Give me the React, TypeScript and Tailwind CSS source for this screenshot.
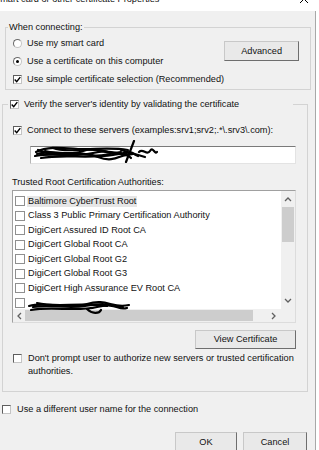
import type { ReactNode } from 'react';

const Check = () => (
  <svg width="7" height="7" viewBox="0 0 7 7" className="block">
    <path d="M0.7 3.5 L2.7 5.7 L6.3 1.1" stroke="#000" strokeWidth="1.4" fill="none" />
  </svg>
);

// sunken checkbox; list rows use the flat grey one
const Box = ({ checked, list }: { checked?: boolean; list?: boolean }) => (
  <span
    className={`flex items-center justify-center shrink-0 bg-white ${
      list
        ? 'w-[10px] h-[10px] border border-[#8f8f8f]'
        : 'w-[9px] h-[9px] border border-t-[#5e5e5e] border-l-[#5e5e5e] border-r-[#c4c4c4] border-b-[#c4c4c4]'
    }`}
  >
    {checked && <Check />}
  </span>
);

const Radio = ({ on }: { on?: boolean }) => (
  <span className="flex items-center justify-center w-[9px] h-[9px] rounded-full border border-t-[#6a6a6a] border-l-[#6a6a6a] border-r-[#c4c4c4] border-b-[#c4c4c4] bg-white shrink-0">
    {on && <span className="w-[3px] h-[3px] rounded-full bg-black" />}
  </span>
);

const Btn = ({ children, className }: { children: ReactNode; className: string }) => (
  <div
    className={`flex items-center justify-center shrink-0 bg-[#e9e9e9] border border-t-[#c8c8c8] border-l-[#c8c8c8] border-r-[#6e6e6e] border-b-[#6e6e6e] ${className}`}
  >
    {children}
  </div>
);

const Row = ({ icon, children }: { icon: ReactNode; children: ReactNode }) => (
  <div className="h-[18px] flex items-center">
    <span className="w-[10px] flex justify-center">{icon}</span>
    <span className="ml-[5px] whitespace-nowrap">{children}</span>
  </div>
);

const Chev = ({ d, w = 8, h = 6 }: { d: string; w?: number; h?: number }) => (
  <svg width={w} height={h} viewBox={`0 0 ${w} ${h}`} className="block">
    <path d={d} stroke="#606060" strokeWidth="1.3" fill="none" />
  </svg>
);

const authorities = [
  'Baltimore CyberTrust Root',
  'Class 3 Public Primary Certification Authority',
  'DigiCert Assured ID Root CA',
  'DigiCert Global Root CA',
  'DigiCert Global Root G2',
  'DigiCert Global Root G3',
  'DigiCert High Assurance EV Root CA',
  '',
];

export default function App() {
  return (
    <div className="w-[319px] h-[450px] overflow-hidden bg-white flex font-['Liberation_Sans',Arial,sans-serif] text-[9.2px] leading-[11px] text-[#111]">
      <div className="w-[316px] h-full flex flex-col shrink-0">
        {/* Title bar (cut off at the top) */}
        <div className="h-[11px] shrink-0 bg-white flex justify-between overflow-hidden">
          <span className="-mt-[6px] -ml-[6px] whitespace-nowrap">Smart card or other certificate Properties</span>
          <svg width="10" height="10" viewBox="0 0 10 10" className="-mt-[6px] mr-[7px] shrink-0">
            <path d="M1 1 L9 9 M9 1 L1 9" stroke="#000" strokeWidth="1" />
          </svg>
        </div>

        <div className="flex-1 bg-[#f0f0f0] border-r border-[#a8a8a8] flex flex-col">
          {/* When connecting */}
          <fieldset className="mt-[11px] ml-[5px] w-[303px] border border-[#d3d3d3]">
            <legend className="ml-[2px] px-[1px]">When connecting:</legend>
            <div className="flex justify-between py-[1px]">
              <div className="flex flex-col pl-[6px]">
                <Row icon={<Radio />}>Use my smart card</Row>
                <Row icon={<Radio on />}>Use a certificate on this computer</Row>
                <Row icon={<Box checked />}>Use simple certificate selection (Recommended)</Row>
              </div>
              <Btn className="w-[75px] h-[20px] mt-[7px] mr-[11px]">Advanced</Btn>
            </div>
          </fieldset>

          {/* Server verification */}
          <fieldset className="mt-[9px] ml-[2px] w-[306px] border border-[#d3d3d3]">
            <legend className="ml-[5px] w-[285px] pl-[2px] flex items-center">
              <Box checked />
              <span className="ml-[5px] whitespace-nowrap">
                {"Verify the server's identity by validating the certificate"}
              </span>
            </legend>
            <div className="flex flex-col pb-[13px]">
              <div className="mt-[13px] pl-[10px] h-[14px] flex items-center">
                <Box checked />
                <span className="ml-[5px] whitespace-nowrap">
                  {'Connect to these servers (examples:srv1;srv2;.*\\.srv3\\.com):'}
                </span>
              </div>

              <div className="relative mt-[9px] ml-[27px] w-[266px] h-[18px] bg-white border border-t-[#7a7a7a] border-l-[#b5b5b5] border-r-[#e3e3e3] border-b-[#e3e3e3]">
                <svg width="125" height="23" viewBox="0 0 125 23" className="absolute left-[2px] -top-[7px]">
                  <g stroke="#000" strokeWidth="2.2" fill="none" strokeLinecap="round">
                    <path d="M3 12 C15 6, 30 8, 45 9 S75 7, 95 10" />
                    <path d="M2 16 C20 12, 40 18, 60 13 S85 17, 100 14" />
                    <path d="M5 10 C25 19, 45 9, 65 17 S90 9, 98 18" />
                    <path d="M8 18 C30 14, 55 19, 80 15 S95 12, 105 16" />
                    <path d="M20 8 C35 14, 55 6, 75 12" />
                    <path d="M4 14 C20 9, 35 17, 50 11 S70 16, 88 12" />
                    <path d="M12 11 C28 15, 44 12, 58 15 S78 10, 92 15" />
                    <path d="M101 1 L93 22" />
                    <path d="M88 10 L112 17" />
                    <path d="M106 12 C110 8, 114 16, 117 11 S122 15, 124 12" />
                  </g>
                </svg>
              </div>

              <div className="mt-[13px] ml-[9px] whitespace-nowrap">Trusted Root Certification Authorities:</div>

              <div className="relative mt-[2px] ml-[9px] w-[284px] h-[133px] bg-white border border-t-[#a0a0a0] border-l-[#a0a0a0] border-r-[#dcdcdc] border-b-[#dcdcdc] flex">
                <div className="flex-1 flex flex-col min-w-0">
                  <div className="h-[118px] overflow-hidden pt-[3px]">
                    {authorities.map((name, i) => (
                      <div key={i} className="h-[14.5px] flex items-center pl-[2px]">
                        <Box list />
                        <span
                          className={`ml-[2px] px-[1px] h-[11px] whitespace-nowrap ${i === 0 ? 'bg-[#e6e6e6]' : ''}`}
                        >
                          {name}
                        </span>
                      </div>
                    ))}
                  </div>
                  {/* horizontal scrollbar */}
                  <div className="h-[13px] bg-[#f0f0f0] flex items-center">
                    <span className="w-[12px] flex justify-center">
                      <Chev d="M5 1 L2 4 L5 7" w={6} h={8} />
                    </span>
                    <span className="w-[228px] h-[11px] bg-[#cdcdcd]" />
                    <span className="flex-1" />
                    <span className="w-[14px] flex justify-center">
                      <Chev d="M1 1 L4 4 L1 7" w={6} h={8} />
                    </span>
                  </div>
                </div>
                {/* vertical scrollbar */}
                <div className="w-[14px] bg-[#f0f0f0] flex flex-col items-center">
                  <span className="h-[16px] flex items-center">
                    <Chev d="M1 5 L4 2 L7 5" />
                  </span>
                  <span className="w-[12px] h-[35px] bg-[#cdcdcd]" />
                  <span className="flex-1" />
                  <span className="h-[16px] flex items-center">
                    <Chev d="M1 1 L4 4 L7 1" />
                  </span>
                  <span className="h-[13px]" />
                </div>
                <svg width="104" height="17" viewBox="0 0 104 17" className="absolute left-[14px] top-[107px]">
                  <g stroke="#000" strokeWidth="2.2" fill="none" strokeLinecap="round">
                    <path d="M2 8 C20 3, 40 12, 60 6 S85 11, 102 7" />
                    <path d="M4 12 C25 8, 50 14, 70 9 S90 13, 100 10" />
                    <path d="M10 5 C30 10, 50 4, 80 8" />
                    <path d="M6 9 C24 6, 40 11, 58 8 S80 6, 96 9" />
                    <path d="M60 11 C65 16, 72 16, 74 12" />
                  </g>
                </svg>
              </div>

              <Btn className="mt-[7px] self-end mr-[11px] w-[101px] h-[19px]">View Certificate</Btn>

              <div className="mt-[2.5px] pl-[10px] flex items-start">
                <span className="mt-[2px]">
                  <Box />
                </span>
                <span className="ml-[6px] w-[272px] leading-[13px]">
                  {"Don't prompt user to authorize new servers or trusted certification authorities."}
                </span>
              </div>
            </div>
          </fieldset>

          <div className="mt-[12px] pl-[2px] h-[12px] flex items-center">
            <Box />
            <span className="ml-[6px] whitespace-nowrap">Use a different user name for the connection</span>
          </div>

          <div className="mt-[16px] flex justify-end gap-[6px] pr-[8px]">
            <Btn className="w-[62px] h-[21px]">OK</Btn>
            <Btn className="w-[64px] h-[21px]">Cancel</Btn>
          </div>
        </div>
      </div>
    </div>
  );
}
